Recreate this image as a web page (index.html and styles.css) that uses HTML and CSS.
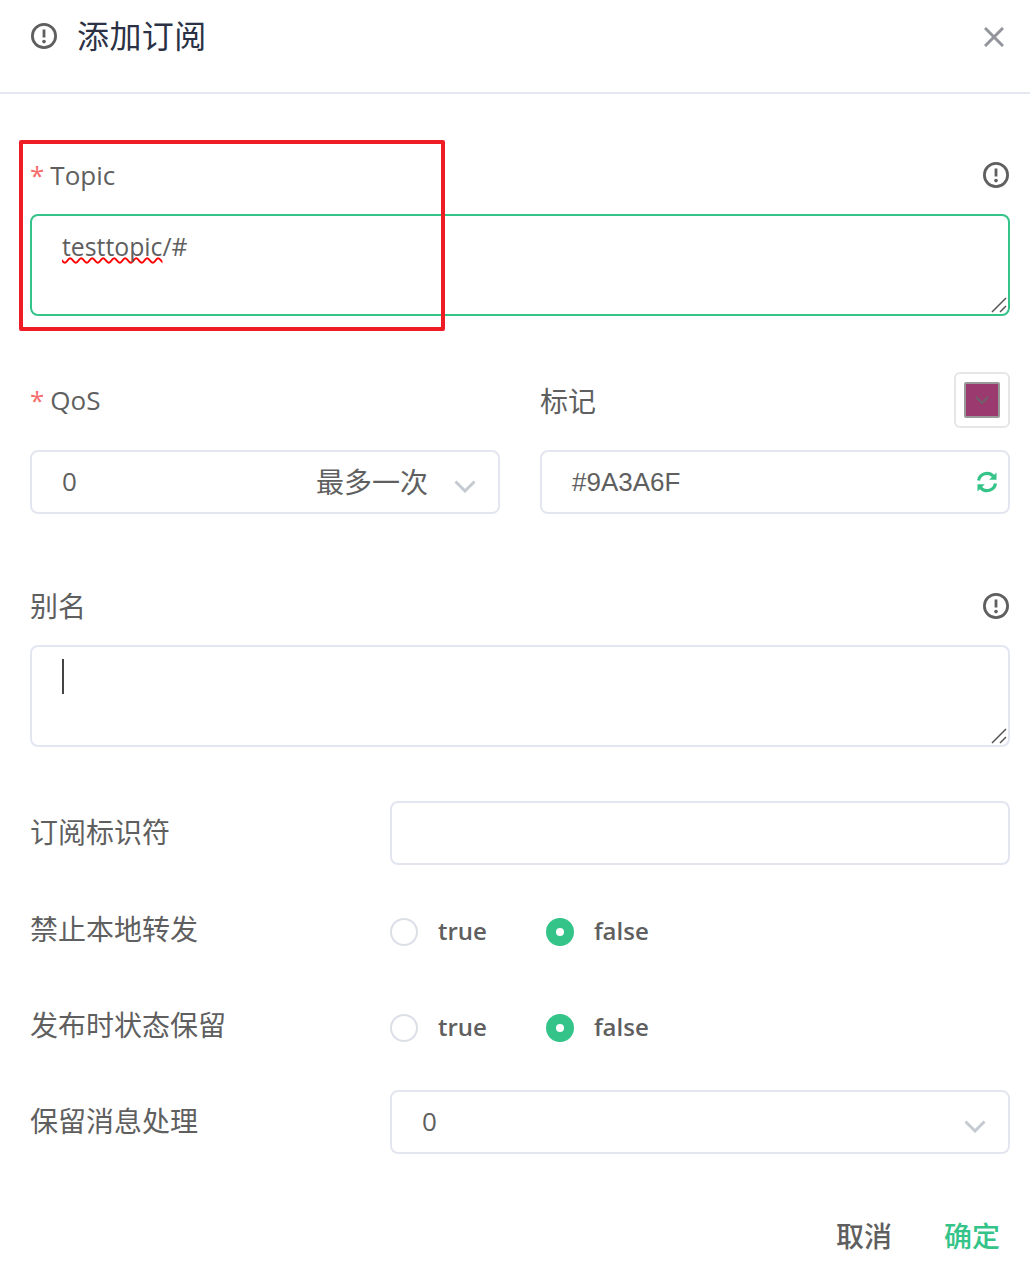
FILE: index.html
```html
<!DOCTYPE html>
<html lang="en">
<head>
    <meta charset="UTF-8">
    <meta name="viewport" content="width=device-width, initial-scale=1.0">
    <title>添加订阅</title>
    <link rel="stylesheet" href="styles.css">
</head>
<body>
    <div class="dialog-header">
        <div class="dialog-title">
            <svg class="info-icon" viewBox="0 0 26 26"><circle cx="13" cy="13" r="11.6"/><path d="M13 6.5v8"/><circle class="dot" cx="13" cy="18.6" r="1.8"/></svg>
            <span>添加订阅</span>
        </div>
        <svg class="close-icon" viewBox="0 0 20 20"><path d="M1 1l18 18M19 1L1 19"/></svg>
    </div>

    <form class="dialog-body">
        <div class="label-row">
            <label><span class="required">*</span><span class="latin">Topic</span></label>
            <svg class="info-icon" viewBox="0 0 26 26"><circle cx="13" cy="13" r="11.6"/><path d="M13 6.5v8"/><circle class="dot" cx="13" cy="18.6" r="1.8"/></svg>
        </div>
        <div class="textarea focused">
            <span class="misspelled">testtopic</span>/#
            <svg class="resize-handle" viewBox="0 0 16 16"><path d="M1 15L15 1M9 15l6-6"/></svg>
        </div>

        <div class="two-cols">
            <div>
                <div class="label-row tall">
                    <label><span class="required">*</span><span class="latin">QoS</span></label>
                </div>
                <div class="select">
                    <span class="select-value">0</span>
                    <span class="select-hint">最多一次</span>
                    <svg class="chevron" viewBox="0 0 22 13"><path d="M1.5 1.5L11 11l9.500-9.500"/></svg>
                </div>
            </div>
            <div>
                <div class="label-row tall">
                    <label class="no-shift">标记</label>
                    <div class="color-picker">
                        <div class="color-swatch">
                            <svg viewBox="0 0 14 8"><path d="M1 1l6 6 6-6"/></svg>
                        </div>
                    </div>
                </div>
                <div class="select">
                    <span class="color-value">#9A3A6F</span>
                    <svg class="refresh-icon" viewBox="0 0 22 22"><path d="M2.500 9.500A8.600 8.600 0 0 1 17.300 5.200"/><path class="fill" d="M20.500 1.500v7.300h-7.300z"/><path d="M19.500 12.500A8.600 8.600 0 0 1 4.700 16.800"/><path class="fill" d="M1.500 20.500v-7.300h7.300z"/></svg>
                </div>
            </div>
        </div>

        <div class="label-row alias-label">
            <label>别名</label>
            <svg class="info-icon" viewBox="0 0 26 26"><circle cx="13" cy="13" r="11.6"/><path d="M13 6.5v8"/><circle class="dot" cx="13" cy="18.6" r="1.8"/></svg>
        </div>
        <div class="textarea">
            <span class="caret"></span>
            <svg class="resize-handle" viewBox="0 0 16 16"><path d="M1 15L15 1M9 15l6-6"/></svg>
        </div>

        <div class="advanced">
            <div class="form-row field-row">
                <label>订阅标识符</label>
                <div class="select"></div>
            </div>
            <div class="form-row">
                <label>禁止本地转发</label>
                <div class="radio-group">
                    <div class="radio"><span class="radio-dot"></span><span class="radio-text">true</span></div>
                    <div class="radio"><span class="radio-dot checked"></span><span class="radio-text">false</span></div>
                </div>
            </div>
            <div class="form-row">
                <label>发布时状态保留</label>
                <div class="radio-group">
                    <div class="radio"><span class="radio-dot"></span><span class="radio-text">true</span></div>
                    <div class="radio"><span class="radio-dot checked"></span><span class="radio-text">false</span></div>
                </div>
            </div>
            <div class="form-row field-row last-row">
                <label>保留消息处理</label>
                <div class="select">
                    <span class="select-value">0</span>
                    <svg class="chevron" viewBox="0 0 22 13"><path d="M1.5 1.5L11 11l9.500-9.500"/></svg>
                </div>
            </div>
        </div>

        <div class="dialog-footer">
            <span>取消</span>
            <span class="confirm">确定</span>
        </div>
    </form>

    <!-- Red box drawn over the Topic field -->
    <div class="highlight-box"></div>
</body>
</html>
```

FILE: styles.css
```css
body {
    font-family: "Open Sans", "Noto Sans CJK SC", sans-serif;
    margin: 0;
    padding: 0;
    background-color: #fff;
    color: #5f5f5f;
    font-size: 28px;
}

.dialog-header {
    height: 92px;
    border-bottom: 2px solid #e6e8f1;
    display: flex;
    justify-content: space-between;
    align-items: flex-start;
    padding: 0 26px 0 31px;
}

.dialog-title {
    display: flex;
    align-items: center;
    gap: 20px;
    height: 72px;
    font-size: 32px;
    letter-spacing: 0.4px;
    color: #2b3245;
}

.dialog-title span {
    padding-bottom: 4px;
}

.info-icon {
    width: 26px;
    height: 26px;
    fill: none;
    stroke: #5f5f5f;
    stroke-width: 2.8;
}

.label-row .info-icon {
    margin-right: 1px;
}

.info-icon .dot {
    fill: #5f5f5f;
    stroke: none;
}

.close-icon {
    width: 20px;
    height: 20px;
    margin-top: 27px;
    fill: none;
    stroke: #92959b;
    stroke-width: 3;
}

.dialog-body {
    padding: 61px 20px 0 30px;
}

.label-row {
    display: flex;
    justify-content: space-between;
    align-items: center;
    height: 40px;
    margin-bottom: 19px;
}

.label-row label {
    padding-bottom: 2px;
}

.label-row label.no-shift {
    padding-bottom: 0;
}

.label-row.tall {
    height: 56px;
    margin-bottom: 22px;
}

.alias-label {
    margin-top: 72px;
}

.required {
    color: #f56c6c;
    margin-right: 6px;
    font-size: 26px;
}

.latin {
    font-size: 26px;
}

.textarea {
    position: relative;
    box-sizing: border-box;
    height: 102px;
    border: 2px solid #e3e6f0;
    border-radius: 8px;
    padding: 13px 30px;
    font-size: 24.8px;
    line-height: 34px;
}

.textarea.focused {
    border-color: #34c388;
}

.misspelled {
    text-decoration: underline wavy #f00;
    text-decoration-thickness: 2px;
    text-decoration-skip-ink: none;
}

.resize-handle {
    position: absolute;
    right: 1px;
    bottom: 1px;
    width: 16px;
    height: 16px;
    fill: none;
    stroke: #555;
    stroke-width: 1.5;
}

.caret {
    display: block;
    width: 2px;
    height: 35px;
    margin-top: -1px;
    background-color: #444;
}

.two-cols {
    display: grid;
    grid-template-columns: 470px 470px;
    gap: 40px;
    margin-top: 56px;
}

.select {
    position: relative;
    box-sizing: border-box;
    height: 64px;
    border: 2px solid #e3e6f0;
    border-radius: 8px;
    padding: 0 30px;
    display: flex;
    align-items: center;
    justify-content: space-between;
    font-size: 26px;
}

.select-value {
    padding-bottom: 2px;
}

.select-hint {
    margin-left: auto;
    margin-right: 26px;
    padding-bottom: 2px;
    font-size: 28px;
}

.chevron {
    width: 22px;
    height: 13px;
    margin: 8px -8px 0 0;
    fill: none;
    stroke: #c5c9d0;
    stroke-width: 3;
}

.color-value {
    font-family: "Liberation Sans", sans-serif;
    font-size: 26px;
}

.color-picker {
    box-sizing: border-box;
    width: 56px;
    height: 56px;
    border: 2px solid #e6e6e6;
    border-radius: 6px;
    padding: 8px;
}

.color-swatch {
    box-sizing: border-box;
    height: 36px;
    background-color: #9a3a6f;
    border: 2px solid #999;
    border-radius: 2px;
    display: flex;
    align-items: center;
    justify-content: center;
}

.color-swatch svg {
    width: 14px;
    height: 8px;
    fill: none;
    stroke: #70606a;
    stroke-width: 2;
}

.refresh-icon {
    width: 22px;
    height: 22px;
    margin-right: -20px;
    fill: none;
    stroke: #34c388;
    stroke-width: 3.2;
}

.refresh-icon .fill {
    fill: #34c388;
    stroke: none;
}

.advanced {
    margin-top: 54px;
    display: flex;
    flex-direction: column;
    gap: 32px;
}

.form-row {
    display: grid;
    grid-template-columns: 360px 620px;
    align-items: center;
    height: 64px;
}

.form-row label {
    padding-bottom: 2px;
}

.form-row.field-row label {
    padding-bottom: 4px;
}

.last-row {
    margin-top: 1px;
}

.radio-group {
    display: flex;
    gap: 59px;
    margin-top: 5px;
}

.radio {
    display: flex;
    align-items: center;
    gap: 20px;
    font-size: 24px;
    font-weight: 600;
}

.radio-text {
    padding-bottom: 2px;
}

.radio-dot {
    box-sizing: border-box;
    width: 28px;
    height: 28px;
    border: 2px solid #dcdfe6;
    border-radius: 50%;
}

.radio-dot.checked {
    border: 10px solid #34c388;
}

.dialog-footer {
    display: flex;
    justify-content: flex-end;
    gap: 52px;
    margin-top: 62px;
    padding: 0 10px 2px 0;
    height: 38px;
    align-items: center;
    font-weight: 500;
}

.confirm {
    color: #34c388;
}

.highlight-box {
    position: absolute;
    left: 19px;
    top: 140px;
    width: 418px;
    height: 183px;
    border: 4px solid #ee1c25;
    border-radius: 2px;
}
```
